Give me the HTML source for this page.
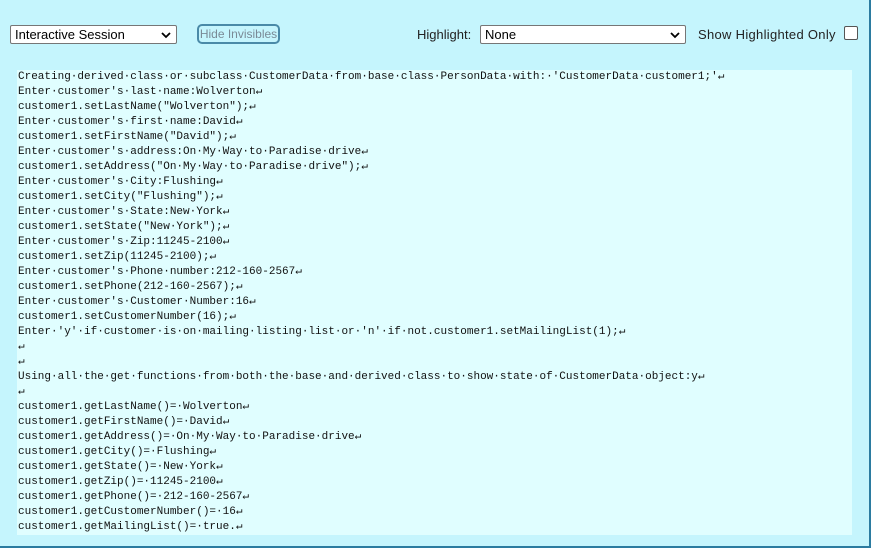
<!DOCTYPE html>
<html><head><meta charset="utf-8"><style>
html,body{margin:0;padding:0}
body{width:872px;height:549px;overflow:hidden;background:#fff;font-family:"Liberation Sans",sans-serif}
.wrap{position:absolute;left:0;top:0;width:869px;height:546px;background:#c5f5fd;border-right:2px solid #2b7ba0;border-bottom:2px solid #2b7ba0}
.sel{position:absolute;height:19px;border:1px solid #767676;background:#fff;border-radius:2px;font-size:13px;line-height:17px;padding-left:4px;box-sizing:border-box;color:#000}
.sel svg{position:absolute;right:5px;top:6px}
.btn{position:absolute;left:197px;top:24px;width:83px;height:20px;box-sizing:border-box;border:2px solid #4a8aa8;border-radius:5px;font-size:12px;color:#7a8a96;line-height:16px;text-align:center;background:#c5f5fd}
.lbl{position:absolute;font-size:13px;color:#222}
.cb{position:absolute;left:844px;top:26px;width:12px;height:12px;border:1px solid #555;border-radius:2px;background:#fff}
pre{position:absolute;left:17px;top:70px;width:835px;height:465px;margin:0;background:#e0feff;font-family:"Liberation Mono",monospace;font-size:11px;line-height:15px;color:#111;padding:0 0 0 1px;box-sizing:border-box}
</style></head><body><div class="wrap">
<div class="sel" style="left:10px;top:25px;width:167px">Interactive Session<svg width="10" height="7" viewBox="0 0 10 7"><path d="M1 1l4 4 4-4" fill="none" stroke="#000" stroke-width="1.8"/></svg></div>
<div class="btn">Hide Invisibles</div>
<div class="lbl" style="left:417px;top:27px">Highlight:</div>
<div class="sel" style="left:480px;top:25px;width:206px">None<svg width="10" height="7" viewBox="0 0 10 7"><path d="M1 1l4 4 4-4" fill="none" stroke="#000" stroke-width="1.8"/></svg></div>
<div class="lbl" style="left:698px;top:27px;letter-spacing:0.3px">Show Highlighted Only</div>
<div class="cb"></div>
<pre>Creating·derived·class·or·subclass·CustomerData·from·base·class·PersonData·with:·'CustomerData·customer1;'↵
Enter·customer's·last·name:Wolverton↵
customer1.setLastName("Wolverton");↵
Enter·customer's·first·name:David↵
customer1.setFirstName("David");↵
Enter·customer's·address:On·My·Way·to·Paradise·drive↵
customer1.setAddress("On·My·Way·to·Paradise·drive");↵
Enter·customer's·City:Flushing↵
customer1.setCity("Flushing");↵
Enter·customer's·State:New·York↵
customer1.setState("New·York");↵
Enter·customer's·Zip:11245-2100↵
customer1.setZip(11245-2100);↵
Enter·customer's·Phone·number:212-160-2567↵
customer1.setPhone(212-160-2567);↵
Enter·customer's·Customer·Number:16↵
customer1.setCustomerNumber(16);↵
Enter·'y'·if·customer·is·on·mailing·listing·list·or·'n'·if·not.customer1.setMailingList(1);↵
↵
↵
Using·all·the·get·functions·from·both·the·base·and·derived·class·to·show·state·of·CustomerData·object:y↵
↵
customer1.getLastName()=·Wolverton↵
customer1.getFirstName()=·David↵
customer1.getAddress()=·On·My·Way·to·Paradise·drive↵
customer1.getCity()=·Flushing↵
customer1.getState()=·New·York↵
customer1.getZip()=·11245-2100↵
customer1.getPhone()=·212-160-2567↵
customer1.getCustomerNumber()=·16↵
customer1.getMailingList()=·true.↵</pre>
</div></body></html>
